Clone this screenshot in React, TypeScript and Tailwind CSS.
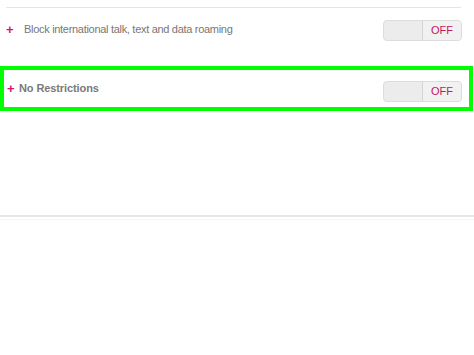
const Toggle = () => (
  <div className="flex h-[21px] w-[79px] overflow-hidden rounded-[4px] border border-[#dcdcdc] bg-[#ececec]">
    <div className="w-[39px] border-r border-[#d4d4d4]" />
    <div className="flex flex-1 items-center justify-center bg-[#f1f1f1] text-[11px] text-[#c4175b]">OFF</div>
  </div>
);

const App = () => (
  <div className="h-[355px] w-[474px] bg-white font-['Liberation_Sans',Arial,sans-serif]">
    <div className="w-[461px] pl-[6px] pt-[7px]">
      <div className="h-px bg-[#e4e4e4]" />
    </div>

    <div className="mt-[12px] flex h-[21px] items-center justify-between pl-[6px] pr-[12px]">
      <div className="-mt-[2px] flex items-center">
        <span className="w-[18px] text-[13px] font-bold leading-none text-[#d6176b]">+</span>
        <span className="text-[11px] tracking-[-0.3px] text-[#777777]">Block international talk, text and data roaming</span>
      </div>
      <Toggle />
    </div>

    <div className="mt-[25px] flex h-[45px] w-[473px] items-start justify-between border-[4px] border-[#00ff00] pl-[3px] pr-[7px]">
      <div className="mt-[10px] flex items-center">
        <span className="w-[12px] text-[13px] font-bold leading-none text-[#d6176b]">+</span>
        <span className="text-[11px] font-bold tracking-[-0.1px] text-[#7a7a7a]">No Restrictions</span>
      </div>
      <div className="mt-[11px]">
        <Toggle />
      </div>
    </div>

    <div className="mt-[104px] h-[2px] bg-[#e6e6e6]" />
    <div className="mt-[2px] h-px bg-[#f6f6f6]" />
  </div>
);

export default App;
